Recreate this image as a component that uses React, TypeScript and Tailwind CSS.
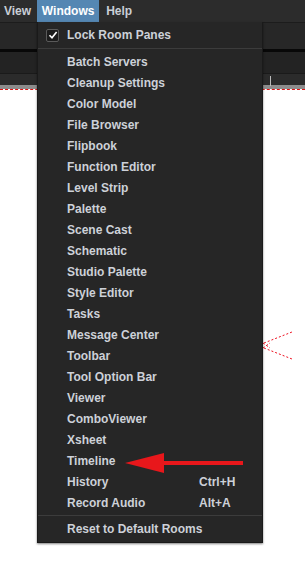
import React from "react";

const ITEMS = [
  "Batch Servers",
  "Cleanup Settings",
  "Color Model",
  "File Browser",
  "Flipbook",
  "Function Editor",
  "Level Strip",
  "Palette",
  "Scene Cast",
  "Schematic",
  "Studio Palette",
  "Style Editor",
  "Tasks",
  "Message Center",
  "Toolbar",
  "Tool Option Bar",
  "Viewer",
  "ComboViewer",
  "Xsheet",
  "Timeline",
];

function Row({ label, shortcut }: { label: string; shortcut?: string }) {
  return (
    <div className="flex h-[21px] items-center whitespace-nowrap pl-[29px]">
      <span className={shortcut ? "w-[132px]" : ""}>{label}</span>
      {shortcut ? <span>{shortcut}</span> : null}
    </div>
  );
}

export default function App() {
  return (
    <div
      className="relative h-[562px] w-[305px] overflow-hidden bg-white text-[12px] font-bold"
      style={{ fontFamily: '"Liberation Sans", Arial, sans-serif' }}
    >
      {/* menu bar */}
      <div className="flex h-[22px] items-stretch bg-[#2c2c2c] text-[#c9ced6]">
        <div className="flex items-center pl-[4px] pr-[6px]">View</div>
        <div className="flex w-[62px] items-center justify-center bg-[#5587b3] text-white">Windows</div>
        <div className="flex items-center pl-[7px]">Help</div>
      </div>

      {/* panels behind */}
      <div className="h-[27px] border-t border-[#1c1c1c] bg-[#272727]" />
      <div className="h-[3px] bg-[#080808]" />
      <div className="h-[21px] bg-[#232323]" />
      <div className="h-px bg-[#1a1a1a]" />
      <div className="relative h-[11px] bg-[#2b2b2b]">
        <div className="absolute left-[270px] top-[2px] h-[10px] w-px bg-[#bbbbbb]" />
      </div>
      <div className="h-[4px] bg-[#8c8c8c]" />
      <div className="h-px border-t border-dashed border-[#e01010]" />

      {/* cross marker on canvas */}
      <svg className="absolute left-[262px] top-[330px]" width="34" height="32" viewBox="0 0 34 32">
        <g stroke="#ee1020" strokeWidth="1" strokeDasharray="2 2" fill="none">
          <line x1="2" y1="13" x2="30" y2="2" />
          <line x1="2" y1="18" x2="30" y2="29" />
          <line x1="1" y1="13" x2="8" y2="18" />
          <line x1="1" y1="18" x2="8" y2="13" />
        </g>
      </svg>

      {/* dropdown */}
      <div className="absolute left-[37px] top-[22px] w-[226px] border border-t-0 border-[#1a1a1a] bg-[#262626] pb-[3px] text-[#cdd1d8] shadow-[0_1px_2px_rgba(0,0,0,0.5)]">
        <div className="flex h-[26px] items-center">
          <div className="ml-[8px] mr-[8px] flex h-[13px] w-[13px] items-center justify-center rounded-[2px] border border-[#5a5a5a] bg-[#1c1c1c]">
            <svg width="10" height="10" viewBox="0 0 10 10">
              <path d="M1.5 5.2 L4 7.8 L8.6 2" stroke="#ffffff" strokeWidth="1.6" fill="none" />
            </svg>
          </div>
          <span>Lock Room Panes</span>
        </div>
        <div className="mb-[2px] h-px bg-[#3c3c3c]" />
        {ITEMS.map((item) => (
          <Row key={item} label={item} />
        ))}
        <Row label="History" shortcut="Ctrl+H" />
        <Row label="Record Audio" shortcut="Alt+A" />
        <div className="my-[2px] h-px bg-[#3c3c3c]" />
        <Row label="Reset to Default Rooms" />
      </div>

      {/* red arrow pointing at Timeline */}
      <svg className="absolute left-[124px] top-[452px]" width="121" height="22" viewBox="0 0 121 22">
        <polygon points="1,11 40,1 40,21" fill="#e8171b" />
        <rect x="38" y="9" width="81" height="4" fill="#e8171b" />
      </svg>
    </div>
  );
}
